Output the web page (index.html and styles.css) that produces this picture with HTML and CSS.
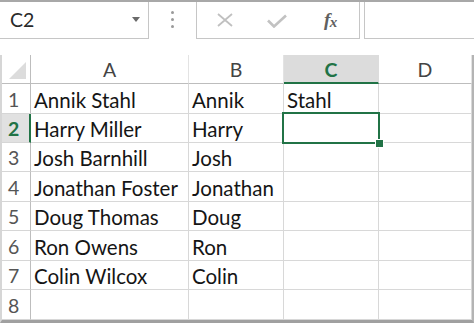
FILE: index.html
```html
<!DOCTYPE html>
<html>
<head>
<meta charset="utf-8">
<link rel="stylesheet" href="styles.css">
</head>
<body>
<div class="frame">
  <div class="topbar">
    <div class="namebox">
      <span class="name">C2</span>
      <span class="caret"></span>
    </div>
    <div class="grip">
      <span class="dot"></span><span class="dot"></span><span class="dot"></span>
    </div>
    <div class="buttons">
      <svg class="ico-x" width="16" height="14" viewBox="0 0 16 14"><path d="M1 1 L15 13 M15 1 L1 13" stroke="#c0c0c0" stroke-width="1.8" fill="none"/></svg>
      <svg class="ico-check" width="20" height="14" viewBox="0 0 20 14"><path d="M1 6.5 L7 12.5 L19 1.5" stroke="#c2c2c2" stroke-width="2.6" fill="none"/></svg>
      <span class="fx">f<span class="fx-x">x</span></span>
    </div>
    <div class="input"></div>
  </div>

  <div class="sheet">
    <div class="hd corner"><svg width="17" height="17" viewBox="0 0 17 17"><path d="M17 0 L17 17 L0 17 Z" fill="#dcdcdc"/></svg></div>
    <div class="hd col">A</div>
    <div class="hd col">B</div>
    <div class="hd col sel">C</div>
    <div class="hd col">D</div>

    <div class="rh">1</div><div class="c">Annik Stahl</div><div class="c">Annik</div><div class="c">Stahl</div><div class="c"></div>
    <div class="rh sel">2</div><div class="c">Harry Miller</div><div class="c">Harry</div><div class="c"></div><div class="c"></div>
    <div class="rh">3</div><div class="c">Josh Barnhill</div><div class="c">Josh</div><div class="c"></div><div class="c"></div>
    <div class="rh">4</div><div class="c">Jonathan Foster</div><div class="c">Jonathan</div><div class="c"></div><div class="c"></div>
    <div class="rh">5</div><div class="c">Doug Thomas</div><div class="c">Doug</div><div class="c"></div><div class="c"></div>
    <div class="rh">6</div><div class="c">Ron Owens</div><div class="c">Ron</div><div class="c"></div><div class="c"></div>
    <div class="rh">7</div><div class="c">Colin Wilcox</div><div class="c">Colin</div><div class="c"></div><div class="c"></div>
    <div class="rh">8</div><div class="c"></div><div class="c"></div><div class="c"></div><div class="c"></div>

    <div class="selection"><span class="handle"></span></div>
  </div>
</div>
</body>
</html>
```

FILE: styles.css
```css
* { box-sizing: border-box; }
html, body { margin: 0; padding: 0; background: #fff; }
body { width: 474px; height: 323px; overflow: hidden; font-family: Lato, "Liberation Sans", sans-serif; }

.frame {
  width: 474px;
  height: 323px;
  border-top: 2px solid #a8a8a8;
  display: flex;
  flex-direction: column;
}

.topbar {
  height: 37px;
  display: flex;
  align-items: stretch;
}

.namebox {
  width: 149px;
  border-right: 1px solid #c6c6c6;
  border-bottom: 1px solid #c6c6c6;
  display: flex;
  align-items: center;
  justify-content: space-between;
  padding: 0 8px 1px 10px;
}
.name { font-size: 19.5px; color: #2a2a2a; }
.caret {
  width: 0; height: 0;
  border-left: 4.5px solid transparent;
  border-right: 4.5px solid transparent;
  border-top: 5px solid #6a6a6a;
}

.grip {
  width: 47px;
  display: flex;
  flex-direction: column;
  align-items: center;
  justify-content: center;
  gap: 4px;
  padding: 0 0 3px 0;
}
.dot { width: 3px; height: 3px; border-radius: 50%; background: #9a9a9a; }

.buttons {
  width: 164px;
  border: 1px solid #c6c6c6;
  border-top: none;
  display: flex;
  align-items: center;
  padding: 0 0 1px 20px;
}
.ico-x { margin-top: 1px; }
.ico-check { margin-left: 34px; margin-top: 2px; }
.fx {
  margin-left: 37px;
  font-family: "Liberation Serif", serif;
  font-style: italic;
  font-weight: bold;
  font-size: 19px;
  color: #606060;
  letter-spacing: -0.5px;
}
.fx-x { font-size: 15px; position: relative; top: 1px; }

.input {
  margin-left: 4px;
  flex: 1;
  border-left: 1px solid #c6c6c6;
  border-bottom: 1px solid #c6c6c6;
}

.sheet {
  position: relative;
  margin-top: 16px;
  display: grid;
  grid-template-columns: 29px 158px 95px 95px 93px;
  grid-template-rows: 29px 30px 29px 29px 30px 29px 30px 29px 30px;
  border-left: 2px solid #d6d6d6;
  border-right: 2px solid #b4b4b4;
  border-bottom: 3px solid #a0a0a0;
  width: 474px;
}

.hd {
  border-bottom: 1px solid #bdbdbd;
  border-right: 1px solid #e3e3e3;
  display: flex;
  align-items: center;
  justify-content: center;
  font-size: 19.5px;
  color: #444;
  padding-top: 1px;
}
.hd.corner {
  border-right: 1px solid #bdbdbd;
  align-items: flex-end;
  justify-content: flex-end;
  padding: 0 4px 4px 0;
}
.hd.sel {
  background: #dcdcdc;
  color: #217346;
  font-weight: bold;
  border-bottom: 2px solid #217346;
  border-right-color: #dcdcdc;
}

.rh {
  border-bottom: 1px solid #d6d6d6;
  border-right: 1px solid #bdbdbd;
  display: flex;
  align-items: center;
  padding: 1px 0 0 6px;
  font-size: 19.5px;
  color: #555;
}
.rh.sel {
  background: #e1e1e1;
  color: #217346;
  font-weight: bold;
  border-right: 2px solid #217346;
}

.c {
  border-bottom: 1px solid #d8d8d8;
  border-right: 1px solid #d8d8d8;
  display: flex;
  align-items: center;
  padding: 2px 0 0 3px;
  font-size: 20.5px;
  color: #151515;
  white-space: nowrap;
  overflow: hidden;
}

.selection {
  position: absolute;
  left: 280px;
  top: 57px;
  width: 98px;
  height: 32px;
  border: 2px solid #217346;
}
.handle {
  position: absolute;
  right: -5px;
  bottom: -5px;
  width: 7px;
  height: 7px;
  background: #217346;
  box-shadow: 0 0 0 1px #fff;
}
```
